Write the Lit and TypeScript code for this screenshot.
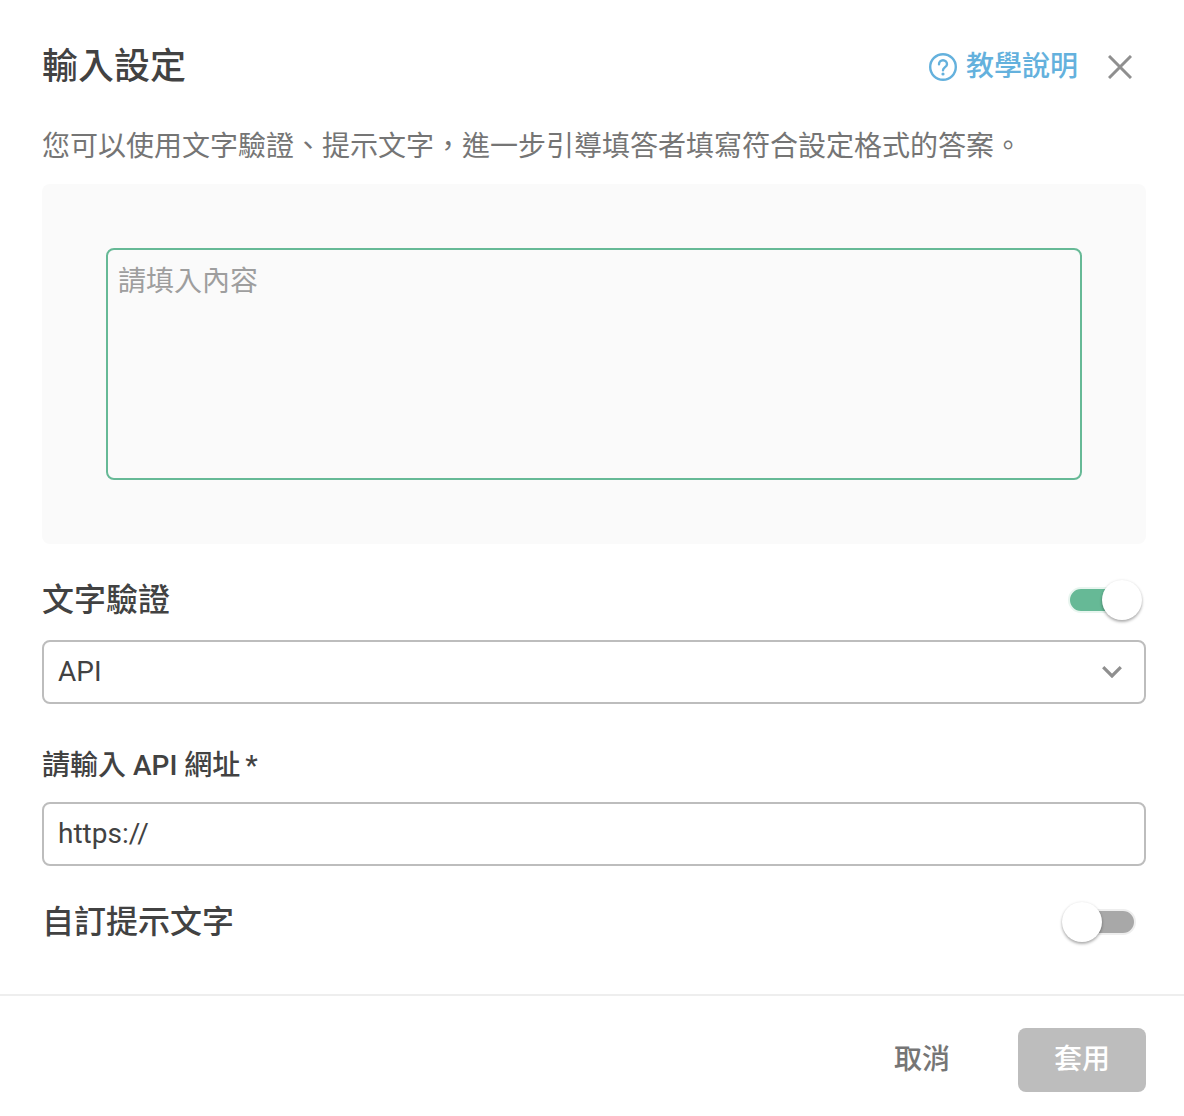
import { LitElement, html, css } from "lit";
import { customElement } from "lit/decorators.js";

@customElement("app-root")
export class AppRoot extends LitElement {
  static styles = css`
    :host { display: block; width: 1184px; height: 1116px; background: #fff; font-family: Roboto, "Noto Sans CJK TC", sans-serif; color: #424242; overflow: hidden; }
    * { box-sizing: border-box; }
    .body { padding: 0 38px 0 42px; height: 994px; display: flex; flex-direction: column; }
    .head { display: flex; align-items: center; height: 48px; margin-top: 43px; }
    .title { font-size: 36px; font-weight: 500; line-height: 48px; flex: 1; color: #424242; }
    .help { display: flex; align-items: center; gap: 9px; color: #64b1dd; font-size: 28px; font-weight: 500; line-height: 48px; margin-right: 30px; }
    .help svg { display: block; }
    .close { display: block; margin-right: 14px; }
    .desc { font-size: 28px; line-height: 40px; color: #757575; margin-top: 36px; white-space: nowrap; }
    .preview { margin-top: 17px; height: 360px; background: #fafafa; border-radius: 8px; padding: 64px; }
    .area { height: 232px; border: 2px solid #66b996; border-radius: 8px; padding: 12px 10px; font-size: 28px; line-height: 40px; color: #9e9e9e; }
    .row { display: flex; align-items: center; justify-content: space-between; }
    .row.v { margin-top: 32px; height: 48px; }
    .row.c { margin-top: 32px; height: 48px; }
    .label { font-size: 32px; font-weight: 500; line-height: 48px; color: #424242; }
    .field { height: 64px; border: 2px solid #bdbdbd; border-radius: 8px; padding: 0 14px 2px; font-size: 28px; display: flex; align-items: center; justify-content: space-between; color: #424242; background: #fff; }
    .select { margin-top: 16px; }
    .sub { margin-top: 38px; font-size: 28px; font-weight: 500; line-height: 48px; height: 48px; color: #424242; }
    .req { margin-left: -2px; }
    .input { margin-top: 12px; }
    .chev { display: block; margin: 2px 8px 0 0; }
    .sw { position: relative; width: 76px; height: 44px; flex: none; }
    .track { position: absolute; top: 9px; height: 26px; border-radius: 13px; border: 2px solid #f0f0f0; }
    .sw.on .track { left: -2px; width: 68px; background: #66b996; border-color: #e8f5ef; }
    .sw.off .track { left: 0; width: 68px; background: #a8a8a8; border-color: #eeeeee; }
    .knob { position: absolute; top: 2px; width: 40px; height: 40px; border-radius: 50%; background: #fff; box-shadow: 0 2px 3px rgba(0,0,0,.3), 0 0 3px rgba(0,0,0,.08); }
    .sw.on .knob { right: 4px; }
    .sw.off .knob { left: -6px; }
    .sw.off { margin-right: 10px; width: 68px; }
    .foot { border-top: 2px solid #eeeeee; height: 122px; padding: 32px 38px 0 0; display: flex; justify-content: flex-end; align-items: flex-start; }
    .cancel { height: 64px; width: 128px; padding-bottom: 6px; display: flex; align-items: center; justify-content: center; font-size: 28px; font-weight: 500; color: #757575; margin-right: 32px; }
    .apply { height: 64px; width: 128px; padding-bottom: 6px; border-radius: 8px; background: #bdbdbd; color: #fff; display: flex; align-items: center; justify-content: center; font-size: 28px; font-weight: 500; }
  `;

  render() {
    return html`
      <div class="body">
        <div class="head">
          <div class="title">輸入設定</div>
          <div class="help">
            <svg width="28" height="28" viewBox="0 0 28 28" fill="none" stroke="#64b1dd" stroke-width="2.4">
              <circle cx="14" cy="14" r="12.800"></circle>
              <path d="M10 11.2a4 4 0 0 1 8 0c0 2.8-4 3-4 6" stroke-linecap="round"></path>
              <circle cx="14" cy="21" r="1.6" fill="#64b1dd" stroke="none"></circle>
            </svg>
            <span>教學說明</span>
          </div>
          <svg class="close" width="24" height="24" viewBox="0 0 24 24" stroke="#8f8f8f" stroke-width="3" fill="none">
            <path d="M1 1 23 23M23 1 1 23"></path>
          </svg>
        </div>
        <div class="desc">您可以使用文字驗證、提示文字&#xFF0C;進一步引導填答者填寫符合設定格式的答案。</div>
        <div class="preview"><div class="area">請填入內容</div></div>
        <div class="row v">
          <div class="label">文字驗證</div>
          <div class="sw on"><div class="track"></div><div class="knob"></div></div>
        </div>
        <div class="field select">
          <span>API</span>
          <svg class="chev" width="20" height="12" viewBox="0 0 20 12" fill="none" stroke="#8f8f8f" stroke-width="3.200"><path d="M1.200 1.200 10 10l8.800-8.800"></path></svg>
        </div>
        <div class="sub">請輸入 API 網址 <span class="req">*</span></div>
        <div class="field input">https://</div>
        <div class="row c">
          <div class="label">自訂提示文字</div>
          <div class="sw off"><div class="track"></div><div class="knob"></div></div>
        </div>
      </div>
      <div class="foot">
        <div class="cancel">取消</div>
        <div class="apply">套用</div>
      </div>
    `;
  }
}
